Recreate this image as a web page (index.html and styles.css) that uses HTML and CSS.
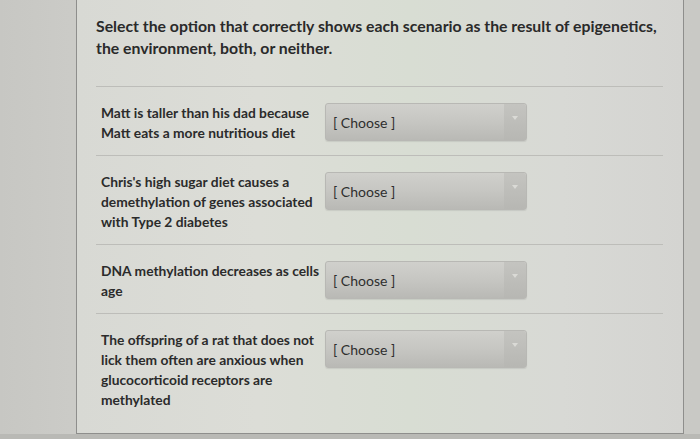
FILE: index.html
```html
<!DOCTYPE html>
<html>
<head>
<meta charset="utf-8">
<link rel="stylesheet" href="styles.css">
</head>
<body>
<div class="screen">
  <div class="panel">
    <p class="prompt">Select the option that correctly shows each scenario as the result of epigenetics, the environment, both, or neither.</p>
    <div class="row">
      <div class="label">Matt is taller than his dad because Matt eats a more nutritious diet</div>
      <div class="select"><span class="choose">[ Choose ]</span><span class="arrow"></span></div>
    </div>
    <div class="row">
      <div class="label">Chris's high sugar diet causes a demethylation of genes associated with Type 2 diabetes</div>
      <div class="select"><span class="choose">[ Choose ]</span><span class="arrow"></span></div>
    </div>
    <div class="row">
      <div class="label">DNA methylation decreases as cells age</div>
      <div class="select"><span class="choose">[ Choose ]</span><span class="arrow"></span></div>
    </div>
    <div class="row last">
      <div class="label">The offspring of a rat that does not lick them often are anxious when glucocorticoid receptors are methylated</div>
      <div class="select"><span class="choose">[ Choose ]</span><span class="arrow"></span></div>
    </div>
  </div>
  <div class="floor"></div>
</div>
</body>
</html>
```
FILE: styles.css
```css
html, body {
  margin: 0;
  padding: 0;
}
body {
  width: 700px;
  height: 439px;
  overflow: hidden;
  background: linear-gradient(90deg, #c7c7c3 0%, #cbcbc7 10%, #c9c9c5 100%);
  font-family: Lato, "Open Sans", sans-serif;
  color: #2a2a2a;
}
.screen {
  display: flex;
  flex-direction: column;
  height: 439px;
}
.panel {
  margin-left: 76px;
  width: 608px;
  height: 434px;
  box-sizing: border-box;
  border: 1px solid #8e8e8c;
  border-top: none;
  padding: 15px 20px 0 19px;
  background: linear-gradient(90deg, #d8d9d4 0%, #dcddd7 30%, #d8ddd3 55%, #d8d9d5 80%, #d4d4d1 100%);
}
.floor {
  height: 5px;
  background: #b9b9b5;
}
.prompt {
  margin: 0;
  font-size: 15.8px;
  font-weight: 700;
  line-height: 22px;
  color: #2a2a2a;
  padding-bottom: 27px;
  border-bottom: 1px solid #bdbdb9;
}
.row {
  display: flex;
  align-items: flex-start;
  padding: 16px 0 12px 5px;
  border-bottom: 1px solid #bdbdb9;
}
.row.last {
  border-bottom: none;
}
.label {
  width: 224px;
  font-size: 13.8px;
  font-weight: 700;
  line-height: 20px;
  color: #2b2b2b;
}
.select {
  width: 202px;
  height: 38px;
  box-sizing: border-box;
  display: flex;
  align-items: center;
  border-radius: 3px;
  border: 1px solid #b8b8b4;
  background: linear-gradient(180deg, #d0d0cc 0%, #c6c6c2 50%, #b9b9b5 100%);
  box-shadow: 0 1px 1px rgba(0,0,0,0.08);
}
.choose {
  flex: 1;
  padding-left: 7px;
  font-size: 14px;
  color: #2e2e2e;
}
.arrow {
  width: 22px;
  height: 100%;
  background: linear-gradient(180deg, #c4c4c0 0%, #b7b7b3 100%);
  border-radius: 0 3px 3px 0;
  position: relative;
}
.arrow::after {
  content: "";
  position: absolute;
  left: 8px;
  top: 12px;
  border-left: 3px solid transparent;
  border-right: 3px solid transparent;
  border-top: 4px solid #dadad6;
}
```
